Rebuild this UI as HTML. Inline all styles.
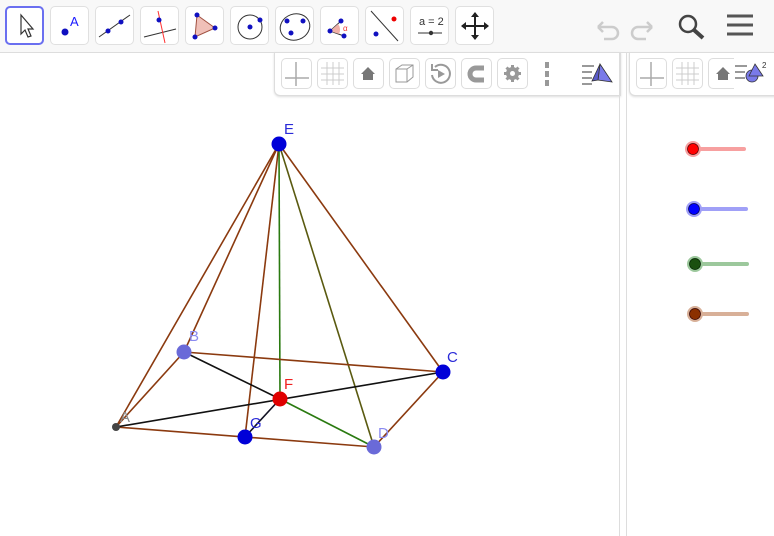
<!DOCTYPE html>
<html><head><meta charset="utf-8"><style>
body{margin:0;width:774px;height:536px;overflow:hidden;background:#fff;font-family:"Liberation Sans",sans-serif;position:relative}
.tb{position:absolute;left:0;top:0;width:774px;height:52px;background:#f8f8f8;border-bottom:1px solid #ddd}
.b{position:absolute;top:6px;width:39px;height:39px;background:#fff;border:1px solid #e0e0e0;border-radius:5px;box-sizing:border-box}
.sb{position:absolute;top:58px;width:31px;height:31px;background:#fff;border:1px solid #ddd;border-radius:5px;box-sizing:border-box}
.pn{position:absolute;background:#fff;border:1px solid #ddd;border-radius:0 0 0 6px;box-shadow:0 1px 2px #ddd}
</style></head><body>
<div class="tb"></div>
<div class="b" style="left:5px;border:2px solid #6a6ff0"><svg width="35" height="35"><path d="M14 7 L14 26 L18 22 L21 29 L24 28 L21 21 L26 21 Z" fill="#fff" stroke="#333" stroke-width="1.2"/></svg></div>
<div class="b" style="left:50px"><svg width="37" height="37"><circle cx="14" cy="25" r="3.5" fill="#1010c0"/><text x="19" y="19" font-size="13" fill="#1a1aff" font-family="Liberation Sans">A</text></svg></div>
<div class="b" style="left:95px"><svg width="37" height="37"><line x1="3" y1="30" x2="34" y2="8" stroke="#333"/><circle cx="12" cy="24" r="2.5" fill="#1010c0"/><circle cx="25" cy="15" r="2.5" fill="#1010c0"/></svg></div>
<div class="b" style="left:140px"><svg width="37" height="37"><line x1="3" y1="30" x2="35" y2="22" stroke="#333"/><line x1="17" y1="4" x2="24" y2="36" stroke="#f33"/><circle cx="18" cy="13" r="2.5" fill="#1010c0"/></svg></div>
<div class="b" style="left:185px"><svg width="37" height="37"><path d="M11 8 L29 21 L9 30Z" fill="#f0c0b8" stroke="#a05040"/><circle cx="11" cy="8" r="2.5" fill="#1010c0"/><circle cx="29" cy="21" r="2.5" fill="#1010c0"/><circle cx="9" cy="30" r="2.5" fill="#1010c0"/></svg></div>
<div class="b" style="left:230px"><svg width="37" height="37"><circle cx="19" cy="20" r="12" fill="none" stroke="#333"/><circle cx="19" cy="20" r="2.5" fill="#1010c0"/><circle cx="29" cy="13" r="2.5" fill="#1010c0"/></svg></div>
<div class="b" style="left:275px"><svg width="37" height="37"><ellipse cx="19" cy="20" rx="15" ry="13" transform="rotate(-20 19 20)" fill="none" stroke="#333"/><circle cx="11" cy="14" r="2.5" fill="#1010c0"/><circle cx="27" cy="14" r="2.5" fill="#1010c0"/><circle cx="15" cy="26" r="2.5" fill="#1010c0"/></svg></div>
<div class="b" style="left:320px"><svg width="37" height="37"><path d="M9 24 L20 14 M9 24 L23 29" stroke="#333"/><path d="M9 24 L17 17 A9 9 0 0 1 18 27Z" fill="#f0b0a8"/><text x="22" y="24" font-size="8" fill="#e33">α</text><circle cx="9" cy="24" r="2.5" fill="#1010c0"/><circle cx="20" cy="14" r="2.5" fill="#1010c0"/><circle cx="23" cy="29" r="2.5" fill="#1010c0"/></svg></div>
<div class="b" style="left:365px"><svg width="37" height="37"><line x1="5" y1="4" x2="32" y2="34" stroke="#333"/><circle cx="28" cy="12" r="2.5" fill="#e00"/><circle cx="10" cy="27" r="2.5" fill="#1010c0"/></svg></div>
<div class="b" style="left:410px"><svg width="37" height="37"><text x="8" y="18" font-size="11" fill="#333">a = 2</text><line x1="7" y1="26" x2="31" y2="26" stroke="#333"/><circle cx="20" cy="26" r="2.2" fill="#333"/></svg></div>
<div class="b" style="left:455px"><svg width="37" height="37"><path d="M19 6 V32 M6 19 H32" stroke="#222" stroke-width="2"/><path d="M19 5 l-4 5 h8z M19 33 l-4 -5 h8z M5 19 l5 -4 v8z M33 19 l-5 -4 v8z" fill="#222"/></svg></div>
<svg style="position:absolute;left:590px;top:10px" width="180" height="34"><path d="M8 17 h14 a6 6 0 0 1 0 12 h-8 M8 17 l5 -5 M8 17 l5 5" fill="none" stroke="#ccc" stroke-width="2.5"/><path d="M62 17 h-14 a6 6 0 0 0 0 12 h8 M62 17 l-5 -5 M62 17 l-5 5" fill="none" stroke="#ccc" stroke-width="2.5"/><circle cx="98" cy="14" r="8" fill="none" stroke="#444" stroke-width="2.5"/><line x1="104" y1="20" x2="113" y2="28" stroke="#444" stroke-width="4"/><path d="M137 6 h26 M137 15 h26 M137 24 h26" stroke="#555" stroke-width="3"/></svg>
<div class="pn" style="left:274px;top:52px;width:345px;height:42px"></div>
<div class="pn" style="left:629px;top:52px;width:145px;height:42px;border-radius:0 0 0 6px"></div>
<div style="position:absolute;left:619px;top:52px;width:1px;height:484px;background:#ddd"></div>
<div style="position:absolute;left:626px;top:52px;width:1px;height:484px;background:#ddd"></div>
<div class="sb" style="left:281px"><svg width="29" height="29"><path d="M14 3 V27 M3 19 H27" stroke="#aaa" stroke-width="1.5"/></svg></div>
<div class="sb" style="left:317px"><svg width="29" height="29"><path d="M9 3 V26 M15 3 V26 M21 3 V26 M3 9 H26 M3 15 H26 M3 21 H26" stroke="#ccc"/></svg></div>
<div class="sb" style="left:353px"><svg width="29" height="29"><path d="M7 15 L14 8 L21 15 H19 V21 H9 V15Z" fill="#777"/></svg></div>
<div class="sb" style="left:389px"><svg width="29" height="29"><path d="M6 10 L12 6 H23 V18 L17 23 H6Z M6 10 H17 V23 M17 10 L23 6" fill="none" stroke="#999"/></svg></div>
<div class="sb" style="left:425px"><svg width="29" height="29"><path d="M9 8 A9 9 0 1 1 6 16" fill="none" stroke="#999" stroke-width="2"/><path d="M12 11 L19 15 L12 19Z" fill="#999"/><path d="M6 5 v6 h6" fill="none" stroke="#999" stroke-width="2"/></svg></div>
<div class="sb" style="left:461px"><svg width="29" height="29"><path d="M22 9 H14 a6 6 0 0 0 0 12 H22" fill="none" stroke="#999" stroke-width="5"/></svg></div>
<div class="sb" style="left:497px"><svg width="29" height="29"><circle cx="14.5" cy="14.5" r="5" fill="none" stroke="#999" stroke-width="3"/><path d="M14.5 6 V23 M6 14.5 H23 M8.5 8.5 L20.5 20.5 M20.5 8.5 L8.5 20.5" stroke="#999" stroke-width="3"/><circle cx="14.5" cy="14.5" r="2.5" fill="#fff"/></svg></div>
<svg style="position:absolute;left:540px;top:60px" width="80" height="30"><rect x="5" y="2" width="4" height="6" fill="#999"/><rect x="5" y="11" width="4" height="6" fill="#999"/><rect x="5" y="20" width="4" height="6" fill="#999"/><path d="M42 6 h12 M42 12 h10 M42 18 h10 M42 24 h10" stroke="#999" stroke-width="2"/><path d="M60 4 L72 22 L58 20Z" fill="#7a7ae8" stroke="#333" stroke-width="0.8"/><path d="M60 4 L58 20 L52 21Z" fill="#5a5ac8" stroke="#333" stroke-width="0.8"/></svg>
<div class="sb" style="left:636px"><svg width="29" height="29"><path d="M14 3 V27 M3 19 H27" stroke="#aaa" stroke-width="1.5"/></svg></div>
<div class="sb" style="left:672px"><svg width="29" height="29"><path d="M9 3 V26 M15 3 V26 M21 3 V26 M3 9 H26 M3 15 H26 M3 21 H26" stroke="#ccc"/></svg></div>
<div class="sb" style="left:708px;width:26px;border-right:none;border-radius:5px 0 0 5px"><svg width="25" height="29"><path d="M7 15 L14 8 L21 15 H19 V21 H9 V15Z" fill="#777"/></svg></div>
<svg style="position:absolute;left:733px;top:58px" width="41" height="30"><path d="M2 8 h12 M2 14 h10 M2 20 h10" stroke="#999" stroke-width="2"/><circle cx="19" cy="18" r="6" fill="#7a7ae8" stroke="#333" stroke-width="0.8"/><path d="M22 6 L30 18 H16Z" fill="#7a7ae8" stroke="#333" stroke-width="0.8"/><text x="29" y="10" font-size="8" fill="#333">2</text></svg>

<svg style="position:absolute;left:0;top:0" width="620" height="536">
<g stroke-width="1.6" fill="none">
<line x1="279" y1="144" x2="116" y2="427" stroke="#8b3a0f"/>
<line x1="279" y1="144" x2="184" y2="352" stroke="#8b3a0f"/>
<line x1="279" y1="144" x2="245" y2="437" stroke="#8b3a0f"/>
<line x1="279" y1="144" x2="443" y2="372" stroke="#8b3a0f"/>
<line x1="279" y1="144" x2="374" y2="447" stroke="#5a5a10"/>
<line x1="279" y1="144" x2="280" y2="399" stroke="#2a7a10"/>
<line x1="116" y1="427" x2="184" y2="352" stroke="#8b3a0f"/>
<line x1="184" y1="352" x2="443" y2="372" stroke="#8b3a0f"/>
<line x1="443" y1="372" x2="374" y2="447" stroke="#8b3a0f"/>
<line x1="116" y1="427" x2="374" y2="447" stroke="#8b3a0f"/>
<line x1="116" y1="427" x2="443" y2="372" stroke="#111"/>
<line x1="184" y1="352" x2="280" y2="399" stroke="#111"/>
<line x1="280" y1="399" x2="374" y2="447" stroke="#2a7a10"/>
<line x1="280" y1="399" x2="245" y2="437" stroke="#112"/>
</g>
<circle cx="279" cy="144" r="7.5" fill="#0000d8"/>
<circle cx="184" cy="352" r="7.5" fill="#6a6ad8"/>
<circle cx="443" cy="372" r="7.5" fill="#0000d8"/>
<circle cx="280" cy="399" r="7.5" fill="#e00000"/>
<circle cx="116" cy="427" r="4" fill="#444"/>
<circle cx="245" cy="437" r="7.5" fill="#0000d8"/>
<circle cx="374" cy="447" r="7.5" fill="#6a6ad8"/>
<g font-size="15" font-family="Liberation Sans">
<text x="284" y="134" fill="#2a2ad8">E</text>
<text x="189" y="341" fill="#8a8af0">B</text>
<text x="447" y="362" fill="#2a2ad8">C</text>
<text x="284" y="389" fill="#f02020">F</text>
<text x="120" y="422" fill="#888">A</text>
<text x="250" y="428" fill="#2a2ad8">G</text>
<text x="378" y="438" fill="#8a8af0">D</text>
</g>
</svg>
<svg style="position:absolute;left:680px;top:130px" width="90" height="200">
<g stroke-linecap="round" stroke-width="4">
<line x1="13" y1="19" x2="64" y2="19" stroke="#f7a0a0"/>
<line x1="14" y1="79" x2="66" y2="79" stroke="#a0a0f7"/>
<line x1="15" y1="134" x2="67" y2="134" stroke="#9cc89c"/>
<line x1="15" y1="184" x2="67" y2="184" stroke="#d8b098"/>
</g>
<circle cx="13" cy="19" r="8" fill="#f7a0a0"/><circle cx="13" cy="19" r="5.5" fill="#f00" stroke="#500" stroke-width="0.7"/>
<circle cx="14" cy="79" r="8" fill="#a0a0f7"/><circle cx="14" cy="79" r="5.5" fill="#00f" stroke="#005" stroke-width="0.7"/>
<circle cx="15" cy="134" r="8" fill="#9cc89c"/><circle cx="15" cy="134" r="5.5" fill="#1a5010" stroke="#020" stroke-width="0.7"/>
<circle cx="15" cy="184" r="8" fill="#d8b098"/><circle cx="15" cy="184" r="5.5" fill="#8b3000" stroke="#300" stroke-width="0.7"/>
</svg>
</body></html>
